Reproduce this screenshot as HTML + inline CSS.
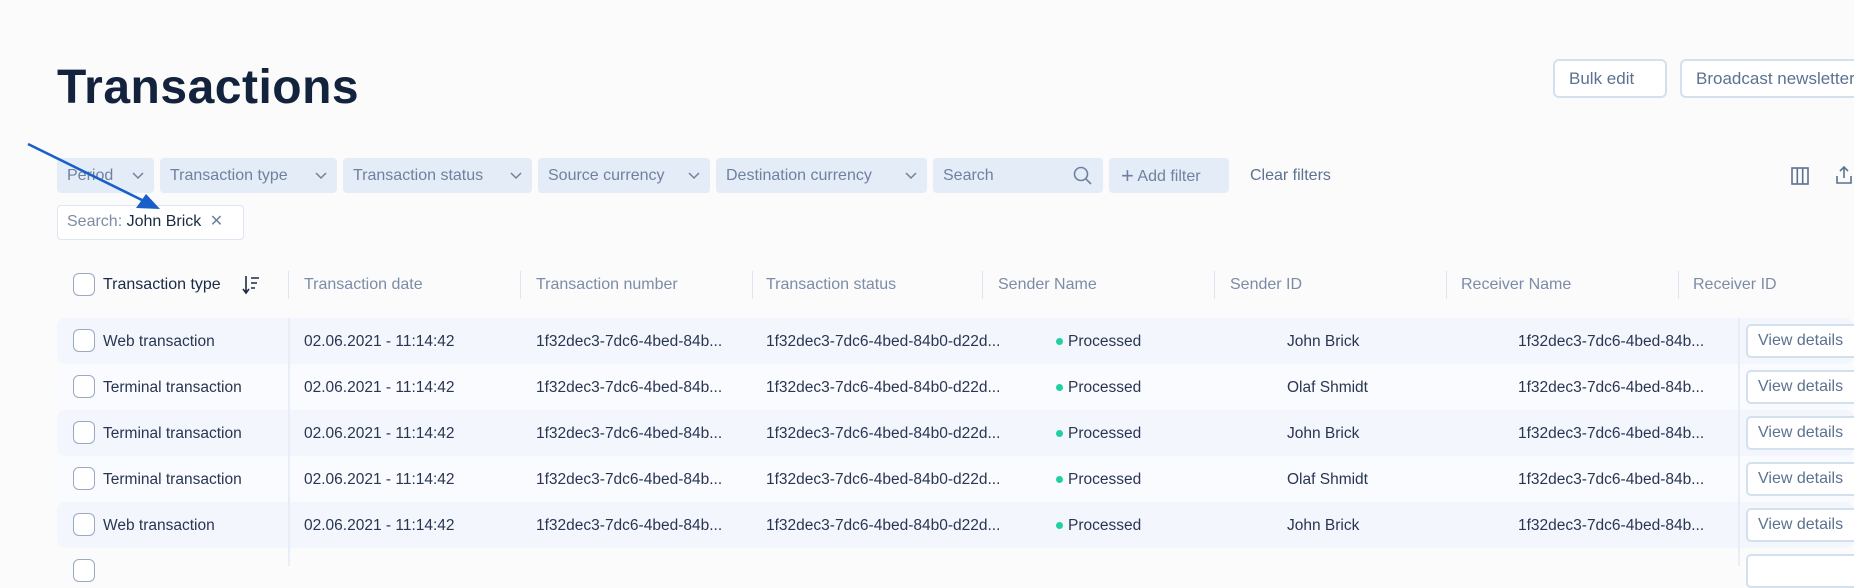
<!DOCTYPE html>
<html><head><meta charset="utf-8"><style>
*{box-sizing:border-box;margin:0;padding:0}
body{width:1854px;height:566px;overflow:hidden;background:#fbfbfc;font-family:"Liberation Sans",sans-serif;position:relative;color:#1b2a44}
.a{position:absolute;white-space:nowrap}
h1{position:absolute;left:57px;top:60px;font-size:48px;font-weight:bold;color:#13223d;letter-spacing:0.5px}
.btn{position:absolute;top:59px;height:39px;border:2px solid #d3e0ee;border-radius:6px;background:#fff;color:#5b7290;font-size:17px;line-height:35px;padding:0 14px;white-space:nowrap;overflow:hidden}
.chip{position:absolute;top:158px;height:35px;background:#e4ecf7;border-radius:4px;color:#6e82a0;font-size:16px;line-height:35px;padding-left:10px;white-space:nowrap}
.chip svg{position:absolute;right:10px;top:14px}
.hd{position:absolute;top:276px;font-size:16px;color:#7d8ca6;white-space:nowrap}
.sep{position:absolute;top:271px;width:1px;height:28px;background:#dce5f1}
.row{position:absolute;left:57px;width:1797px;height:46px;border-radius:8px}
.cb{position:absolute;width:22px;height:23px;border:1.5px solid #9aa9bf;border-radius:6px;background:#fff}
.t{position:absolute;font-size:15.5px;color:#283651;white-space:nowrap}
.vd{position:absolute;left:1746px;width:120px;height:34px;border:2px solid #d3e0ee;border-radius:5px;background:#fff;color:#5b7290;font-size:16px;line-height:30px;padding-left:10px;white-space:nowrap}
.dot{position:absolute;width:7px;height:7px;border-radius:50%;background:#1fd1a0}
</style></head><body>
<h1>Transactions</h1>
<div class="btn" style="left:1553px;width:114px">Bulk edit</div>
<div class="btn" style="left:1680px;width:200px">Broadcast newsletter</div>

<div class="chip" style="left:57px;width:97px">Period<svg width="12" height="8"><path d="M1 1l5 5 5-5" stroke="#6e82a0" stroke-width="1.5" fill="none"/></svg></div>
<div class="chip" style="left:160px;width:177px">Transaction type<svg width="12" height="8"><path d="M1 1l5 5 5-5" stroke="#6e82a0" stroke-width="1.5" fill="none"/></svg></div>
<div class="chip" style="left:343px;width:189px">Transaction status<svg width="12" height="8"><path d="M1 1l5 5 5-5" stroke="#6e82a0" stroke-width="1.5" fill="none"/></svg></div>
<div class="chip" style="left:538px;width:172px">Source currency<svg width="12" height="8"><path d="M1 1l5 5 5-5" stroke="#6e82a0" stroke-width="1.5" fill="none"/></svg></div>
<div class="chip" style="left:716px;width:211px">Destination currency<svg width="12" height="8"><path d="M1 1l5 5 5-5" stroke="#6e82a0" stroke-width="1.5" fill="none"/></svg></div>
<div class="chip" style="left:933px;width:170px">Search<svg width="20" height="20" style="top:8px;right:10px"><circle cx="8" cy="8" r="6.5" stroke="#6e82a0" stroke-width="1.6" fill="none"/><path d="M13 13l5 5" stroke="#6e82a0" stroke-width="1.6"/></svg></div>
<div class="chip" style="left:1109px;width:120px;padding-left:12px"><span style="font-size:22px;vertical-align:-2px">+</span> Add filter</div>
<div class="a" style="left:1250px;top:167px;font-size:16px;color:#5b7290">Clear filters</div>
<svg class="a" style="left:1790px;top:166px" width="20" height="20"><rect x="2" y="2" width="16" height="16" stroke="#5b7290" stroke-width="1.6" fill="none"/><path d="M7.3 2v16M12.7 2v16" stroke="#5b7290" stroke-width="1.6"/></svg>
<svg class="a" style="left:1834px;top:164px" width="20" height="22"><path d="M10 14V3M6 7l4-4 4 4M3 12v7h14v-7" stroke="#5b7290" stroke-width="1.6" fill="none"/></svg>

<div class="a" style="left:57px;top:205px;width:187px;height:35px;border:1.5px solid #dce5f1;border-radius:4px;background:#fff;font-size:16px;line-height:32px;padding-left:9px;color:#7d8ca6">Search: <span style="color:#1b2a44">John Brick</span> <span style="color:#6e82a0;margin-left:4px">✕</span></div>

<svg class="a" style="left:0;top:130px" width="200" height="100"><path d="M28 14L150 74" stroke="#1a5fc8" stroke-width="2.5"/><path d="M160 79L136 78L146 64Z" fill="#1a5fc8"/></svg>

<div class="cb" style="left:73px;top:273px"></div>
<div class="hd" style="left:103px;color:#1b2a44">Transaction type</div>
<svg class="a" style="left:242px;top:274px" width="18" height="22"><path d="M4 2v16M1 15l3 4 3-4M9 4h8M9 9h6M9 14h4" stroke="#1b2a44" stroke-width="1.6" fill="none"/></svg>
<div class="sep" style="left:288px"></div><div class="hd" style="left:304px">Transaction date</div>
<div class="sep" style="left:520px"></div><div class="hd" style="left:536px">Transaction number</div>
<div class="sep" style="left:752px"></div><div class="hd" style="left:766px">Transaction status</div>
<div class="sep" style="left:982px"></div><div class="hd" style="left:998px">Sender Name</div>
<div class="sep" style="left:1214px"></div><div class="hd" style="left:1230px">Sender ID</div>
<div class="sep" style="left:1446px"></div><div class="hd" style="left:1461px">Receiver Name</div>
<div class="sep" style="left:1678px"></div><div class="hd" style="left:1693px">Receiver ID</div>

<div class="row" style="top:318px;background:#f4f6fd"></div>
<div class="row" style="top:364px;background:#fafbfe"></div>
<div class="row" style="top:410px;background:#f4f6fd"></div>
<div class="row" style="top:456px;background:#fafbfe"></div>
<div class="row" style="top:502px;background:#f4f6fd"></div>
<div class="a" style="left:288px;top:318px;width:2px;height:248px;background:#e8eef8"></div>
<div class="a" style="left:1738px;top:318px;width:2px;height:248px;background:#e8eef8"></div>

<div class="cb" style="left:73px;top:329px"></div><div class="t" style="left:103px;top:333px">Web transaction</div>
<div class="cb" style="left:73px;top:375px"></div><div class="t" style="left:103px;top:379px">Terminal transaction</div>
<div class="cb" style="left:73px;top:421px"></div><div class="t" style="left:103px;top:425px">Terminal transaction</div>
<div class="cb" style="left:73px;top:467px"></div><div class="t" style="left:103px;top:471px">Terminal transaction</div>
<div class="cb" style="left:73px;top:513px"></div><div class="t" style="left:103px;top:517px">Web transaction</div>
<div class="cb" style="left:73px;top:559px"></div>

<div class="t" style="left:304px;top:333px">02.06.2021 - 11:14:42</div>
<div class="t" style="left:304px;top:379px">02.06.2021 - 11:14:42</div>
<div class="t" style="left:304px;top:425px">02.06.2021 - 11:14:42</div>
<div class="t" style="left:304px;top:471px">02.06.2021 - 11:14:42</div>
<div class="t" style="left:304px;top:517px">02.06.2021 - 11:14:42</div>

<div class="t" style="left:536px;top:333px">1f32dec3-7dc6-4bed-84b...</div>
<div class="t" style="left:536px;top:379px">1f32dec3-7dc6-4bed-84b...</div>
<div class="t" style="left:536px;top:425px">1f32dec3-7dc6-4bed-84b...</div>
<div class="t" style="left:536px;top:471px">1f32dec3-7dc6-4bed-84b...</div>
<div class="t" style="left:536px;top:517px">1f32dec3-7dc6-4bed-84b...</div>

<div class="t" style="left:766px;top:333px">1f32dec3-7dc6-4bed-84b0-d22d...</div>
<div class="t" style="left:766px;top:379px">1f32dec3-7dc6-4bed-84b0-d22d...</div>
<div class="t" style="left:766px;top:425px">1f32dec3-7dc6-4bed-84b0-d22d...</div>
<div class="t" style="left:766px;top:471px">1f32dec3-7dc6-4bed-84b0-d22d...</div>
<div class="t" style="left:766px;top:517px">1f32dec3-7dc6-4bed-84b0-d22d...</div>

<div class="dot" style="left:1056px;top:338px"></div><div class="t" style="left:1068px;top:333px">Processed</div>
<div class="dot" style="left:1056px;top:384px"></div><div class="t" style="left:1068px;top:379px">Processed</div>
<div class="dot" style="left:1056px;top:430px"></div><div class="t" style="left:1068px;top:425px">Processed</div>
<div class="dot" style="left:1056px;top:476px"></div><div class="t" style="left:1068px;top:471px">Processed</div>
<div class="dot" style="left:1056px;top:522px"></div><div class="t" style="left:1068px;top:517px">Processed</div>

<div class="t" style="left:1287px;top:333px">John Brick</div>
<div class="t" style="left:1287px;top:379px">Olaf Shmidt</div>
<div class="t" style="left:1287px;top:425px">John Brick</div>
<div class="t" style="left:1287px;top:471px">Olaf Shmidt</div>
<div class="t" style="left:1287px;top:517px">John Brick</div>

<div class="t" style="left:1518px;top:333px">1f32dec3-7dc6-4bed-84b...</div>
<div class="t" style="left:1518px;top:379px">1f32dec3-7dc6-4bed-84b...</div>
<div class="t" style="left:1518px;top:425px">1f32dec3-7dc6-4bed-84b...</div>
<div class="t" style="left:1518px;top:471px">1f32dec3-7dc6-4bed-84b...</div>
<div class="t" style="left:1518px;top:517px">1f32dec3-7dc6-4bed-84b...</div>

<div class="vd" style="top:324px">View details</div>
<div class="vd" style="top:370px">View details</div>
<div class="vd" style="top:416px">View details</div>
<div class="vd" style="top:462px">View details</div>
<div class="vd" style="top:508px">View details</div>
<div class="vd" style="top:554px"></div>
</body></html>
